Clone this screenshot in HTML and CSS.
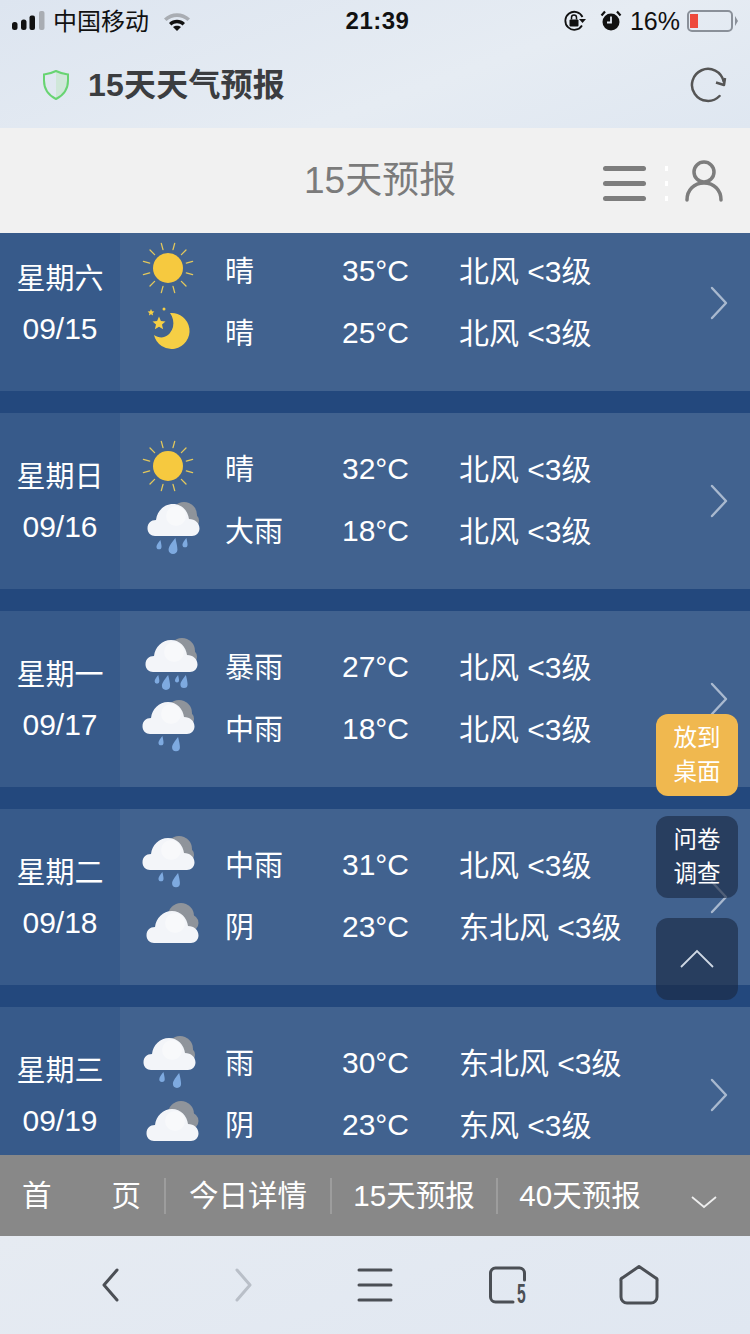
FILE: index.html
```html
<!DOCTYPE html>
<html lang="zh-CN">
<head>
    <meta charset="UTF-8">
    <meta name="viewport" content="width=device-width, initial-scale=1.0">
    <title>15天天气预报</title>
    <link rel="stylesheet" href="styles.css">
</head>
<body>
    <svg class="icon-defs" width="0" height="0">
        <defs>
            <path id="drop" d="M1.8 -8C2.8 -4 3.4 -1 3.4 1A3.4 3.4 0 0 1 -3.4 1C-3.4 -1.5 -0.5 -5 1.8 -8Z" fill="#7eaae0"/>
            <g id="cloud-front">
                <path d="M9.500 27.500C9.500 22 13 19 18 19C19 10 26 3 35 3C44 3 50 10 51 18C57 18 61.500 22 61.500 27.500C61.500 32 58 35 54 35H17C13 35 9.500 32 9.500 27.500Z" fill="#f3f5f9"/>
                <circle cx="38" cy="15" r="10" fill="#f8f9fb"/>
            </g>
            <g id="cloud">
                <circle cx="46" cy="14" r="13" fill="#8f949b"/>
                <circle cx="52" cy="20" r="9" fill="#8f949b"/>
                <use href="#cloud-front"/>
            </g>
            <symbol id="sun" viewBox="0 0 70 60">
                <circle cx="30" cy="27" r="15" fill="#f6c93f"/>
                <g stroke="#e3c85c" stroke-width="1.3" stroke-linecap="round">
                    <path d="M35 8.700 36.700 2.400"/><path d="M43.400 13.600 48 9"/><path d="M48.300 22.100 54.600 20.400"/>
                    <path d="M48.300 31.900 54.600 33.600"/><path d="M43.400 40.400 48 45"/><path d="M35 45.300 36.700 51.600"/>
                    <path d="M25 45.300 23.300 51.600"/><path d="M16.600 40.400 12 45"/><path d="M11.700 31.900 5.400 33.600"/>
                    <path d="M11.700 22.100 5.400 20.400"/><path d="M16.600 13.600 12 9"/><path d="M25 8.700 23.300 2.400"/>
                </g>
            </symbol>
            <symbol id="moon" viewBox="0 0 70 60">
                <path d="M32 10A18 18 0 1 1 16 32C22 36 31 36 35 24C36 19 35 14 32 10Z" fill="#f6cf45"/>
                <path d="M21 13.500 22.900 18 27.500 18.500 24 21.600 25.100 26.300 21 23.800 16.900 26.300 18 21.600 14.500 18.500 19.100 18Z" fill="#f6cf45"/>
                <path d="M13 6 14 8.300 16.400 8.600 14.600 10.200 15.100 12.600 13 11.300 10.900 12.600 11.400 10.200 9.600 8.600 12 8.300Z" fill="#f6cf45"/>
                <circle cx="26" cy="6" r="1.500" fill="#f6cf45"/>
            </symbol>
            <symbol id="rain-big" viewBox="0 0 70 60">
                <use href="#cloud"/>
                <use href="#drop" transform="translate(21 45) scale(.75)"/>
                <use href="#drop" transform="translate(35 47.400) scale(1.3)"/>
                <use href="#drop" transform="translate(47 43) scale(.75)"/>
            </symbol>
            <symbol id="rain-storm" viewBox="0 0 70 60">
                <use href="#cloud" x="-2"/>
                <use href="#drop" transform="translate(19 43.600) scale(.7)"/>
                <use href="#drop" transform="translate(28 47.600) scale(1.2)"/>
                <use href="#drop" transform="translate(39 42.800) scale(.6)"/>
                <use href="#drop" transform="translate(46 46.400) scale(1.05)"/>
            </symbol>
            <symbol id="rain-mid" viewBox="0 0 70 60">
                <use href="#cloud" x="-5"/>
                <use href="#drop" transform="translate(23 43) scale(.75)"/>
                <use href="#drop" transform="translate(38 47.200) scale(1.15)"/>
            </symbol>
            <symbol id="rain-small" viewBox="0 0 70 60">
                <use href="#cloud" x="-4" y="2"/>
                <use href="#drop" transform="translate(24 45.400) scale(.8)"/>
                <use href="#drop" transform="translate(39 49.600) scale(1.2)"/>
            </symbol>
            <symbol id="overcast" viewBox="0 0 70 60">
                <circle cx="43" cy="19" r="13" fill="#8f949b"/>
                <circle cx="52" cy="26" r="8.500" fill="#8f949b"/>
                <use href="#cloud-front" x="-1" y="11"/>
            </symbol>
            <symbol id="chevron" viewBox="0 0 20 34">
                <path d="M3 2 17 17 3 32" fill="none" stroke="#a9b9cf" stroke-width="2.400" stroke-linecap="round" stroke-linejoin="round"/>
            </symbol>
        </defs>
    </svg>

    <div class="phone-top">
        <div class="status-bar">
            <div class="status-left">
                <svg class="signal" width="36" height="20" viewBox="0 0 36 20">
                    <rect x="0" y="11" width="5.500" height="8" rx="2.500" fill="#111"/>
                    <rect x="9" y="8.500" width="5.500" height="10.500" rx="2.500" fill="#111"/>
                    <rect x="17.500" y="4.500" width="5.500" height="14.500" rx="2" fill="#111"/>
                    <rect x="27" y="0" width="5.500" height="19" rx="2" fill="#a9adb3"/>
                </svg>
                <span>中国移动</span>
                <svg class="wifi" width="30" height="22" viewBox="0 0 30 22">
                    <path d="M2 8.500C9.500 1.500 20.500 1.500 28 8.500L25.500 11C19.500 5.500 10.500 5.500 4.500 11Z" fill="#a9adb3"/>
                    <path d="M7 13C11.500 8.800 18.500 8.800 23 13L20.600 15.400C17.200 12.600 12.800 12.600 9.400 15.400Z" fill="#111"/>
                    <path d="M11 17C13.300 15.200 16.700 15.200 19 17L15 21Z" fill="#111"/>
                </svg>
            </div>
            <div class="status-time">21:39</div>
            <div class="status-right">
                <svg width="24" height="22" viewBox="0 0 24 22">
                    <path d="M19 15.500A9 9 0 1 1 19.500 7" fill="none" stroke="#111" stroke-width="1.800"/>
                    <path d="M16 9H23L19.500 13Z" fill="#111"/>
                    <rect x="6.500" y="9.500" width="9" height="7" rx="1" fill="#111"/>
                    <path d="M8.500 9.500V7.500A2.500 2.500 0 0 1 13.500 7.500V9.500" fill="none" stroke="#111" stroke-width="1.500"/>
                </svg>
                <svg class="alarm" width="22" height="22" viewBox="0 0 22 22">
                    <circle cx="11" cy="12" r="8.500" fill="#111"/>
                    <path d="M11 6.500V12.500H7" fill="none" stroke="#e2e8f1" stroke-width="1.800"/>
                    <path d="M1.500 5.500 5 1.500M20.500 5.500 17 1.500" stroke="#111" stroke-width="2.200"/>
                </svg>
                <span class="battery-text">16%</span>
                <div class="battery"><div class="battery-fill"></div></div>
            </div>
        </div>
        <div class="url-bar">
            <svg class="shield" width="30" height="32" viewBox="0 0 30 32">
                <path d="M15 2C19 4 23 5 27 5.500V11.500C27 21 21 27 15 30Z" fill="#cfe7d9"/>
                <path d="M15 2C11 4 7 5 3 5.500V11.500C3 21 9 27 15 30C21 27 27 21 27 11.500V5.500C23 5 19 4 15 2Z" fill="none" stroke="#68d472" stroke-width="2"/>
            </svg>
            <div class="url-title">15天天气预报</div>
            <svg class="reload" width="38" height="38" viewBox="0 0 38 38">
                <path d="M30.500 30A16 16 0 1 1 34.600 15.500" fill="none" stroke="#555" stroke-width="2.500" stroke-linecap="round"/>
                <path d="M27 16.500 35 19 36 12" fill="none" stroke="#555" stroke-width="2.500" stroke-linejoin="round"/>
            </svg>
        </div>
    </div>

    <header class="page-head">
        <h1>15天预报</h1>
        <div class="hamburger"><i></i><i></i><i></i></div>
        <div class="head-dots"><i></i><i></i><i></i></div>
        <svg class="user" width="40" height="44" viewBox="0 0 40 44">
            <circle cx="20" cy="13" r="10" fill="none" stroke="#7d7d7d" stroke-width="3.500"/>
            <path d="M3 41C3 31 10 24 20 24C30 24 37 31 37 41" fill="none" stroke="#7d7d7d" stroke-width="3.500" stroke-linecap="round"/>
        </svg>
    </header>

    <main class="forecast">
        <div class="day">
            <div class="day-date"><span>星期六</span><span class="day-num">09/15</span></div>
            <div class="day-lines">
                <div class="line"><svg class="wx"><use href="#sun"/></svg><span class="wx-name">晴</span><span class="temp">35°C</span><span class="wind">北风 &lt;3级</span></div>
                <div class="line"><svg class="wx"><use href="#moon"/></svg><span class="wx-name">晴</span><span class="temp">25°C</span><span class="wind">北风 &lt;3级</span></div>
            </div>
            <svg class="more"><use href="#chevron"/></svg>
        </div>
        <div class="day">
            <div class="day-date"><span>星期日</span><span class="day-num">09/16</span></div>
            <div class="day-lines">
                <div class="line"><svg class="wx"><use href="#sun"/></svg><span class="wx-name">晴</span><span class="temp">32°C</span><span class="wind">北风 &lt;3级</span></div>
                <div class="line"><svg class="wx"><use href="#rain-big"/></svg><span class="wx-name">大雨</span><span class="temp">18°C</span><span class="wind">北风 &lt;3级</span></div>
            </div>
            <svg class="more"><use href="#chevron"/></svg>
        </div>
        <div class="day">
            <div class="day-date"><span>星期一</span><span class="day-num">09/17</span></div>
            <div class="day-lines">
                <div class="line"><svg class="wx"><use href="#rain-storm"/></svg><span class="wx-name">暴雨</span><span class="temp">27°C</span><span class="wind">北风 &lt;3级</span></div>
                <div class="line"><svg class="wx"><use href="#rain-mid"/></svg><span class="wx-name">中雨</span><span class="temp">18°C</span><span class="wind">北风 &lt;3级</span></div>
            </div>
            <svg class="more"><use href="#chevron"/></svg>
        </div>
        <div class="day">
            <div class="day-date"><span>星期二</span><span class="day-num">09/18</span></div>
            <div class="day-lines">
                <div class="line"><svg class="wx"><use href="#rain-mid"/></svg><span class="wx-name">中雨</span><span class="temp">31°C</span><span class="wind">北风 &lt;3级</span></div>
                <div class="line"><svg class="wx"><use href="#overcast"/></svg><span class="wx-name">阴</span><span class="temp">23°C</span><span class="wind">东北风 &lt;3级</span></div>
            </div>
            <svg class="more"><use href="#chevron"/></svg>
        </div>
        <div class="day">
            <div class="day-date"><span>星期三</span><span class="day-num">09/19</span></div>
            <div class="day-lines">
                <div class="line"><svg class="wx"><use href="#rain-small"/></svg><span class="wx-name">雨</span><span class="temp">30°C</span><span class="wind">东北风 &lt;3级</span></div>
                <div class="line"><svg class="wx"><use href="#overcast"/></svg><span class="wx-name">阴</span><span class="temp">23°C</span><span class="wind">东风 &lt;3级</span></div>
            </div>
            <svg class="more"><use href="#chevron"/></svg>
        </div>
    </main>

    <div class="float-tools">
        <a class="float-btn float-yellow" href="#link">放到<br>桌面</a>
        <a class="float-btn" href="#link">问卷<br>调查</a>
        <a class="float-btn" href="#link">
            <svg width="36" height="20" viewBox="0 0 36 20"><path d="M2 18 18 2 34 18" fill="none" stroke="#cfd8e4" stroke-width="1.800"/></svg>
        </a>
    </div>

    <nav class="tabs">
        <a class="tab" href="#link"><span class="tab-home"><span>首</span><span>页</span></span></a>
        <a class="tab" href="#link">今日详情</a>
        <a class="tab" href="#link">15天预报</a>
        <a class="tab" href="#link">40天预报</a>
        <svg class="tab-more" width="28" height="14" viewBox="0 0 28 14"><path d="M2 2 14 12 26 2" fill="none" stroke="#eee" stroke-width="1.800"/></svg>
    </nav>

    <footer class="browser-bar">
        <svg width="40" height="40" viewBox="0 0 40 40"><path d="M26 5 13 20 26 35" fill="none" stroke="#4b4f55" stroke-width="3" stroke-linecap="round" stroke-linejoin="round"/></svg>
        <svg width="40" height="40" viewBox="0 0 40 40"><path d="M14 5 27 20 14 35" fill="none" stroke="#b9bfc8" stroke-width="3" stroke-linecap="round" stroke-linejoin="round"/></svg>
        <svg width="40" height="40" viewBox="0 0 40 40"><path d="M4 5H36M4 20H36M4 35H36" fill="none" stroke="#4b4f55" stroke-width="3" stroke-linecap="round"/></svg>
        <svg width="48" height="48" viewBox="-4 -4 48 48">
            <path d="M26 37H8.500A5 5 0 0 1 3.500 32V8A5 5 0 0 1 8.500 3H32.500A5 5 0 0 1 37.500 8V15" fill="none" stroke="#4b4f55" stroke-width="3" stroke-linecap="round"/>
            <text class="tab-count" transform="translate(30 38) scale(.58 1)">5</text>
        </svg>
        <svg width="40" height="42" viewBox="0 0 40 42"><path d="M20 2.500 36 13.500A3 3 0 0 1 38 17V33A6 6 0 0 1 32 39H8A6 6 0 0 1 2 33V17A3 3 0 0 1 4 13.500Z" fill="none" stroke="#4b4f55" stroke-width="3" stroke-linejoin="round"/></svg>
    </footer>
</body>
</html>
```

FILE: styles.css
```css
* {
    box-sizing: border-box;
}
html, body {
    margin: 0;
    padding: 0;
}
body {
    position: relative;
    width: 750px;
    height: 1334px;
    overflow: hidden;
    display: flex;
    flex-direction: column;
    font-family: "Liberation Sans", "Noto Sans CJK SC", sans-serif;
    background-color: #23487d;
}
a {
    color: inherit;
    text-decoration: none;
}
.icon-defs {
    position: absolute;
}

/* top of the phone */
.phone-top {
    height: 128px;
    flex: none;
    background: linear-gradient(160deg, #dde5f0, #e6ecf3 60%, #dfe7f1);
}
.status-bar {
    height: 42px;
    display: grid;
    grid-template-columns: 1fr auto 1fr;
    align-items: center;
    padding: 0 17px 0 12px;
    font-size: 24px;
    color: #111;
}
.status-left {
    display: flex;
    align-items: center;
}
.status-left span {
    margin-left: 5px;
    margin-bottom: 4px;
}
.wifi {
    margin-left: 13px;
}
.status-time {
    margin-left: 10px;
    font-weight: 700;
    font-size: 24px;
    letter-spacing: 0.5px;
}
.status-right {
    display: flex;
    align-items: center;
    justify-content: flex-end;
}
.alarm {
    margin-left: 13px;
}
.battery-text {
    font-size: 25px;
    margin-left: 8px;
    margin-right: 7px;
}
.battery {
    position: relative;
    width: 46px;
    height: 22px;
    padding: 2px 2px 2px 1px;
    border: 2px solid #8a9099;
    border-radius: 5px;
}
.battery::after {
    content: "";
    position: absolute;
    right: -7px;
    top: 4px;
    border-left: 3px solid #8a9099;
    border-top: 5px solid transparent;
    border-bottom: 5px solid transparent;
}
.battery-fill {
    width: 8px;
    height: 100%;
    background-color: #ee4a3c;
}
.url-bar {
    height: 86px;
    display: flex;
    align-items: center;
    padding: 0 23px 0 41px;
}
.url-title {
    flex: 1;
    margin-left: 17px;
    margin-bottom: 6px;
    font-size: 32px;
    letter-spacing: 0.2px;
    font-weight: 700;
    color: #3b3d40;
}

/* page header */
.page-head {
    height: 105px;
    flex: none;
    display: flex;
    align-items: center;
    position: relative;
    padding-left: 603px;
    background-color: #f1f1f1;
}
.page-head h1 {
    position: absolute;
    left: 304px;
    top: 30px;
    margin: 0;
    font-size: 37px;
    line-height: 46px;
    font-weight: 400;
    color: #7b7b7b;
}
.hamburger, .head-dots {
    display: flex;
    flex-direction: column;
    justify-content: space-between;
    height: 35px;
    margin-top: 6px;
}
.hamburger i {
    display: block;
    width: 43px;
    height: 5px;
    border-radius: 3px;
    background-color: #7d7d7d;
}
.head-dots {
    margin-left: 19px;
}
.head-dots i {
    display: block;
    width: 3px;
    height: 5px;
    background-color: #fff;
}
.user {
    margin-left: 16px;
}

/* forecast list */
.forecast {
    flex: 1;
    min-height: 0;
    overflow: hidden;
}
.day {
    position: relative;
    display: flex;
    height: 176px;
    margin-bottom: 22px;
    background-color: #41628f;
    color: #fff;
}
.day:first-child {
    margin-top: -18px;
}
.day-date {
    width: 120px;
    flex: none;
    display: flex;
    flex-direction: column;
    align-items: center;
    justify-content: center;
    gap: 8px;
    padding-top: 2px;
    background-color: #375a8a;
    font-size: 29px;
    line-height: 41px;
}
.day-num {
    font-size: 30px;
}
.day-lines {
    padding-top: 25px;
}
.line {
    display: flex;
    align-items: center;
    height: 62px;
    font-size: 29px;
}
.wx {
    width: 70px;
    height: 60px;
    flex: none;
    margin-left: 18px;
    margin-right: 17px;
}
.wx-name {
    width: 117px;
    margin-bottom: 4px;
}
.temp {
    width: 117px;
    font-size: 30px;
}
.wind {
    font-size: 30px;
    margin-bottom: 4px;
}
.more {
    position: absolute;
    right: 21px;
    top: 71px;
    width: 20px;
    height: 34px;
}

/* floating buttons */
.float-tools {
    position: absolute;
    right: 12px;
    top: 714px;
    display: flex;
    flex-direction: column;
    gap: 20px;
}
.float-btn {
    width: 82px;
    height: 82px;
    display: flex;
    align-items: center;
    justify-content: center;
    text-align: center;
    border-radius: 12px;
    font-size: 23.5px;
    line-height: 34px;
    color: #fff;
    background-color: rgba(26, 40, 66, 0.62);
}
.float-yellow {
    background-color: #f0b84f;
}

/* bottom tabs */
.tabs {
    position: relative;
    height: 81px;
    flex: none;
    display: flex;
    align-items: center;
    margin-left: -1px;
    background-color: #888;
    color: #fff;
    font-size: 29.5px;
}
.tab {
    width: 166px;
    height: 36px;
    line-height: 36px;
    text-align: center;
    border-left: 2px solid #9d9d9d;
}
.tab:first-child {
    width: 165px;
    border-left: 0;
}
.tab-home {
    display: inline-flex;
    justify-content: space-between;
    width: 119px;
}
.tab-more {
    margin-left: 28px;
    margin-top: 12px;
}

/* browser toolbar */
.browser-bar {
    height: 98px;
    flex: none;
    display: grid;
    grid-template-columns: repeat(5, 132px);
    justify-content: center;
    justify-items: center;
    align-items: center;
    background: linear-gradient(160deg, #e6ebf2, #e0e7f1);
}
.tab-count {
    font-size: 27px;
    font-weight: 700;
    font-family: "Liberation Sans", sans-serif;
    fill: #4b4f55;
}
```
